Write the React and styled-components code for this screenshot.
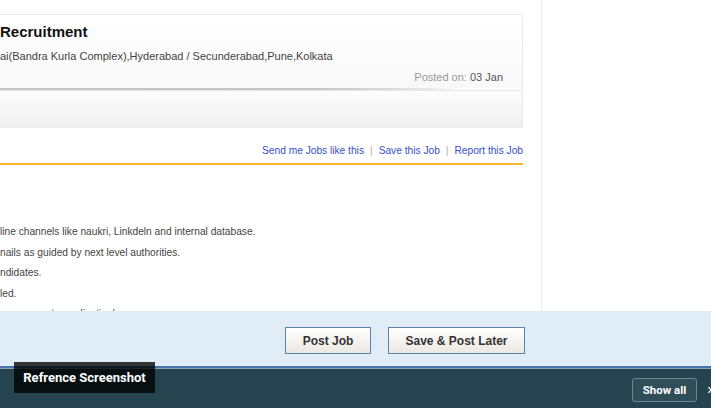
import React from "react";
import styled, { createGlobalStyle } from "styled-components";

const Global = createGlobalStyle`
  html, body { margin: 0; padding: 0; background: #fff; overflow: hidden; }
  body { font-family: "Liberation Sans", Arial, sans-serif; }
`;

const Page = styled.div`
  width: 711px;
  height: 408px;
  display: flex;
  flex-direction: column;
  position: relative;
  overflow: hidden;
`;

const Main = styled.div`
  height: 311px;
  display: flex;
  overflow: hidden;
`;

const LeftCol = styled.div`
  width: 542px;
  flex-shrink: 0;
  border-right: 1px solid #ececec;
  padding: 14px 18px 0 0;
  box-sizing: border-box;
`;

const Card = styled.div`
  height: 114px;
  border: 1px solid #ebebeb;
  border-left: none;
  box-sizing: border-box;
  display: flex;
  flex-direction: column;
`;

const CardHead = styled.div`
  height: 73px;
  box-sizing: border-box;
  background: linear-gradient(#ffffff, #f8f8f8);
  display: flex;
  flex-direction: column;
  padding: 7px 19px 0 0;
`;

const Title = styled.div`
  font-size: 15px;
  font-weight: bold;
  color: #111;
  line-height: 19px;
`;

const Location = styled.div`
  margin-top: 8px;
  font-size: 11px;
  color: #444;
  line-height: 14px;
`;

const Posted = styled.div`
  margin-top: 7px;
  align-self: flex-end;
  font-size: 11px;
  line-height: 14px;
  color: #999;
  span { color: #555; }
`;

const Divider = styled.div`
  height: 2px;
  background: linear-gradient(to right, #c2c2c2 0%, #c6c6c6 62%, #e8e8e8 82%, transparent 88%);
  border-bottom: 1px solid #e6e6e6;
`;

const CardFoot = styled.div`
  flex: 1;
  background: linear-gradient(#fdfdfd, #efefef);
`;

const LinksRow = styled.div`
  margin-top: 16px;
  display: flex;
  justify-content: flex-end;
  align-items: center;
  gap: 6px;
  font-size: 10.2px;
  line-height: 14px;
  padding-bottom: 5px;
  border-bottom: 2px solid #f5b82a;
`;

const Link = styled.a`
  color: #3450cc;
  text-decoration: none;
`;

const Sep = styled.span`
  color: #aab;
`;

const Body = styled.ul`
  list-style: none;
  margin: 0;
  padding: 57px 0 0 0;
  font-size: 10.2px;
  line-height: 20.5px;
  color: #444;
`;

const Item = styled.li`
  white-space: nowrap;
`;

const RightCol = styled.div`
  flex: 1;
  background: #fff;
`;

const ActionBar = styled.div`
  height: 55px;
  background: #e1edf6;
  display: flex;
  align-items: center;
  padding-left: 285px;
  gap: 17px;
  box-sizing: border-box;
  padding-top: 4px;
`;

const Btn = styled.button`
  height: 27px;
  width: ${(p) => p.$w}px;
  border: 1px solid #5d82ad;
  background: linear-gradient(#ffffff, #ebe8e2);
  font-family: "Liberation Sans", Arial, sans-serif;
  font-weight: bold;
  font-size: 12px;
  color: #333;
  padding: 0;
`;

const BlueLine = styled.div`
  height: 2px;
  background: #4a72ad;
  border-bottom: 1px solid #8aa0b4;
`;

const DarkBar = styled.div`
  flex: 1;
  background: #26444f;
  display: flex;
  align-items: center;
  justify-content: flex-end;
  gap: 10px;
`;

const ShowAll = styled.button`
  width: 65px;
  height: 24px;
  border: 1px solid #6b8891;
  border-radius: 3px;
  background: #2f4e58;
  color: #fff;
  font-family: Roboto, "Liberation Sans", sans-serif;
  font-weight: bold;
  font-size: 11.5px;
  padding: 0;
  margin-top: 3px;
`;

const Close = styled.span`
  color: #fff;
  font-family: "Liberation Sans", Arial, sans-serif;
  font-size: 14px;
  width: 4px;
  overflow: hidden;
  margin-top: 3px;
`;

const Badge = styled.div`
  position: absolute;
  left: 14px;
  top: 362px;
  width: 141px;
  height: 31px;
  background: rgba(0, 0, 0, 0.78);
  color: #fff;
  font-family: Roboto, "Liberation Sans", sans-serif;
  font-weight: bold;
  font-size: 13px;
  display: flex;
  align-items: center;
  justify-content: center;
`;

export default function App() {
  return (
    <Page>
      <Global />
      <Main>
        <LeftCol>
          <Card>
            <CardHead>
              <Title>Recruitment</Title>
              <Location>ai(Bandra Kurla Complex),Hyderabad / Secunderabad,Pune,Kolkata</Location>
              <Posted>Posted on: <span>03 Jan</span></Posted>
            </CardHead>
            <Divider />
            <CardFoot />
          </Card>
          <LinksRow>
            <Link href="#">Send me Jobs like this</Link>
            <Sep>|</Sep>
            <Link href="#">Save this Job</Link>
            <Sep>|</Sep>
            <Link href="#">Report this Job</Link>
          </LinksRow>
          <Body>
            <Item>line channels like naukri, Linkdeln and internal database.</Item>
            <Item>nails as guided by next level authorities.</Item>
            <Item>ndidates.</Item>
            <Item>led.</Item>
            <Item>assessment coordination's</Item>
          </Body>
        </LeftCol>
        <RightCol />
      </Main>
      <ActionBar>
        <Btn $w={86}>Post Job</Btn>
        <Btn $w={137}>Save &amp; Post Later</Btn>
      </ActionBar>
      <BlueLine />
      <DarkBar>
        <ShowAll>Show all</ShowAll>
        <Close>×</Close>
      </DarkBar>
      <Badge>Refrence Screenshot</Badge>
    </Page>
  );
}
